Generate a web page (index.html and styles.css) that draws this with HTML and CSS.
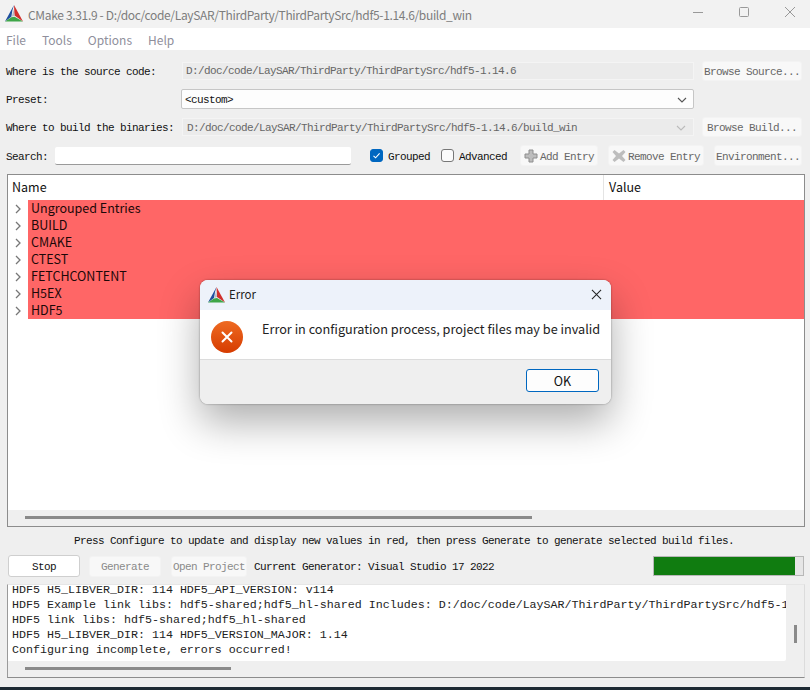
FILE: index.html
```html
<!DOCTYPE html>
<html lang="en">
<head>
<meta charset="utf-8">
<title>CMake</title>
<link rel="stylesheet" href="styles.css">
</head>
<body>
<div class="app">
  <header class="titlebar">
    <svg class="logo" viewBox="0 0 17 16"><polygon points="8.5,0 0,15.5 6,11 7,5" fill="#1f4f9e"/><polygon points="8.5,0 17,15.5 9,10" fill="#d0302c"/><polygon points="0,15.5 17,15.5 9,11 6,11.5" fill="#3fa648"/><polygon points="8,4 9,10 6.5,11" fill="#b8bcc4"/></svg>
    <span class="title">CMake 3.31.9 - D:/doc/code/LaySAR/ThirdParty/ThirdPartySrc/hdf5-1.14.6/build_win</span>
    <div class="winctl">
      <svg viewBox="0 0 12 12"><path d="M1 6.500H11" stroke="#999" fill="none"/></svg>
      <svg viewBox="0 0 12 12"><rect x="1.500" y="1.500" width="9" height="9" rx="1" stroke="#999" fill="none"/></svg>
      <svg viewBox="0 0 12 12"><path d="M1 1L11 11M11 1L1 11" stroke="#999" fill="none"/></svg>
    </div>
  </header>
  <nav class="menu"><span>File</span><span>Tools</span><span>Options</span><span>Help</span></nav>
  <main class="content">
    <div class="paths">
      <label class="mono">Where is the source code:</label>
      <div class="field mono dim">D:/doc/code/LaySAR/ThirdParty/ThirdPartySrc/hdf5-1.14.6</div>
      <button class="btn mono dim wide">Browse Source...</button>
      <label class="mono">Preset:</label>
      <div class="select mono"><span>&lt;custom&gt;</span><svg class="chev" viewBox="0 0 10 6"><path d="M1 1L5 5L9 1" stroke="#555" fill="none" stroke-width="1.1"/></svg></div>
      <span></span>
      <label class="mono">Where to build the binaries:</label>
      <div class="field mono dim combo"><span>D:/doc/code/LaySAR/ThirdParty/ThirdPartySrc/hdf5-1.14.6/build_win</span><svg class="chev" viewBox="0 0 10 6"><path d="M1 1L5 5L9 1" stroke="#bbb" fill="none" stroke-width="1.1"/></svg></div>
      <button class="btn mono dim wide">Browse Build...</button>
    </div>
    <div class="searchrow">
      <label class="mono searchlabel">Search:</label>
      <div class="search"></div>
      <span class="check on"><svg viewBox="0 0 13 13"><path d="M3.500 6.800L5.600 8.800L9.600 4.400" stroke="#fff" fill="none" stroke-width="1.1"/></svg></span>
      <label class="mono chk1">Grouped</label>
      <span class="check"></span>
      <label class="mono chk2">Advanced</label>
      <button class="btn mono dim add"><svg class="tool" viewBox="0 0 14 14"><path d="M5 1H9V5H13V9H9V13H5V9H1V5H5Z" fill="#bdbdbd" stroke="#8e8e8e"/></svg>Add Entry</button>
      <button class="btn mono dim remove"><svg class="tool" viewBox="0 0 14 14"><path d="M2.500 1L7 4.500L11.500 1L13.500 3L10 7L13.500 11L11.500 13L7 9.500L2.500 13L.5 11L4 7L.5 3Z" fill="#bdbdbd"/></svg>Remove Entry</button>
      <button class="btn mono dim env">Environment...</button>
    </div>
    <section class="tree">
      <div class="thead"><span class="tname">Name</span><span class="tvalue">Value</span></div>
      <ul class="rows">
        <li><svg viewBox="0 0 6 10"><path d="M1 1L5 5L1 9" stroke="#777" fill="none" stroke-width="1.3"/></svg><span>Ungrouped Entries</span></li>
        <li><svg viewBox="0 0 6 10"><path d="M1 1L5 5L1 9" stroke="#777" fill="none" stroke-width="1.3"/></svg><span>BUILD</span></li>
        <li><svg viewBox="0 0 6 10"><path d="M1 1L5 5L1 9" stroke="#777" fill="none" stroke-width="1.3"/></svg><span>CMAKE</span></li>
        <li><svg viewBox="0 0 6 10"><path d="M1 1L5 5L1 9" stroke="#777" fill="none" stroke-width="1.3"/></svg><span>CTEST</span></li>
        <li><svg viewBox="0 0 6 10"><path d="M1 1L5 5L1 9" stroke="#777" fill="none" stroke-width="1.3"/></svg><span>FETCHCONTENT</span></li>
        <li><svg viewBox="0 0 6 10"><path d="M1 1L5 5L1 9" stroke="#777" fill="none" stroke-width="1.3"/></svg><span>H5EX</span></li>
        <li><svg viewBox="0 0 6 10"><path d="M1 1L5 5L1 9" stroke="#777" fill="none" stroke-width="1.3"/></svg><span>HDF5</span></li>
      </ul>
      <div class="hscroll"><i class="thumb t1"></i></div>
    </section>
    <p class="hint mono">Press Configure to update and display new values in red, then press Generate to generate selected build files.</p>
    <div class="actions">
      <button class="btn mono stop">Stop</button>
      <button class="btn mono dim gen">Generate</button>
      <button class="btn mono dim open">Open Project</button>
      <span class="mono gentext">Current Generator: Visual Studio 17 2022</span>
      <div class="progress"><i></i></div>
    </div>
    <section class="logframe">
      <div class="logrow">
        <div class="logview"><pre class="log">HDF5 H5_LIBVER_DIR: 114 HDF5_API_VERSION: v114
HDF5 Example link libs: hdf5-shared;hdf5_hl-shared Includes: D:/doc/code/LaySAR/ThirdParty/ThirdPartySrc/hdf5-1.14.6/include
HDF5 link libs: hdf5-shared;hdf5_hl-shared
HDF5 H5_LIBVER_DIR: 114 HDF5_VERSION_MAJOR: 1.14
Configuring incomplete, errors occurred!</pre></div>
        <div class="vscroll"><i></i></div>
      </div>
      <div class="hscroll low"><i class="thumb t2"></i></div>
    </section>
  </main>
  <div class="taskedge"></div>

  <div class="dialog">
    <div class="dhead">
      <svg class="dlogo" viewBox="0 0 17 16"><polygon points="8.5,0 0,15.5 6,11 7,5" fill="#1f4f9e"/><polygon points="8.5,0 17,15.5 9,10" fill="#d0302c"/><polygon points="0,15.5 17,15.5 9,11 6,11.5" fill="#3fa648"/><polygon points="8,4 9,10 6.5,11" fill="#b8bcc4"/></svg>
      <span class="dtitle">Error</span>
      <svg class="dclose" viewBox="0 0 12 12"><path d="M1 1L11 11M11 1L1 11" stroke="#222" fill="none" stroke-width="1.1"/></svg>
    </div>
    <div class="dbody">
      <div class="erricon"><svg viewBox="0 0 12 12"><path d="M1.500 1.500L10.500 10.500M10.500 1.500L1.500 10.500" stroke="#fff" fill="none" stroke-width="2" stroke-linecap="round"/></svg></div>
      <p class="dmsg">Error in configuration process, project files may be invalid</p>
    </div>
    <div class="dfoot"><button class="okbtn">OK</button></div>
  </div>
</div>
</body>
</html>
```
FILE: styles.css
```css
* { box-sizing: border-box; }
html, body { margin: 0; padding: 0; height: 690px; overflow: hidden; }
body { background: #efefef; font-family: "Noto Sans CJK SC", "Noto Sans", sans-serif; color: #111; }
.app { position: relative; width: 810px; height: 690px; display: flex; flex-direction: column; overflow: hidden; }
.mono { font-family: "Liberation Mono", monospace; font-size: 11px; letter-spacing: -0.6px; color: #111; white-space: pre; padding-top: 2px; }
.mono.dim { color: #666; }

.titlebar { height: 28px; background: #f2f2f2; display: flex; align-items: center; padding-left: 5px; flex: none; }
.logo { width: 18px; height: 17px; margin-right: 5px; margin-top: -2px; }
.title { font-size: 12px; letter-spacing: -0.33px; color: #7d7d7d; white-space: nowrap; flex: 1; }
.winctl { display: flex; gap: 34px; padding-right: 14px; margin-top: -4px; }
.winctl svg { width: 12px; height: 12px; }

.menu { height: 22px; background: #fff; display: flex; gap: 16px; padding-left: 6px; align-items: center; font-size: 12px; color: #8f8f9c; flex: none; }

.content { flex: none; height: 637px; padding-top: 12px; display: flex; flex-direction: column; }
.paths { display: grid; grid-template-columns: 182px 512px 100px; column-gap: 0; grid-template-rows: 18px 20px 18px; row-gap: 9px; padding-left: 6px; align-items: center; }
.paths label { display: block; }
.field { height: 18px; margin-left: -6px; background: #ebebeb; border: 1px solid #f4f4f4; line-height: 15px; padding: 1px 0 0 3px; overflow: hidden; width: 512px; }
.combo { display: flex; justify-content: space-between; align-items: center; padding: 2px 7px 0 4px; }
.chev { width: 10px; height: 6px; flex: none; }
.select { height: 20px; margin-left: -7px; width: 513px; background: #fdfdfd; border: 1px solid #c6c6c6; border-radius: 2px; display: flex; justify-content: space-between; align-items: center; padding: 2px 6px 0 3px; }
.btn { background: #f8f8f8; border: 1px solid #f3f3f3; border-radius: 3px; padding: 2px 0 0; height: 20px; display: flex; align-items: center; justify-content: center; }
.wide { width: 100px; margin-left: 2px; }

.searchrow { display: flex; align-items: center; height: 21px; margin-top: 9px; padding-left: 6px; }
.searchlabel { width: 49px; }
.search { width: 296px; height: 18px; background: #fff; border-bottom: 1px solid #9a9a9a; border-radius: 2px; margin-right: 19px; }
.check { width: 13px; height: 13px; border: 1px solid #777; border-radius: 3px; background: #fbfbfb; flex: none; display: block; }
.check.on { background: #0067c0; border-color: #0067c0; }
.check svg { display: block; width: 13px; height: 13px; margin: -1px; }
.chk1 { margin-left: 5px; margin-right: 11px; width: 42px; }
.chk2 { margin-left: 5px; margin-right: 13px; width: 48px; }
.add { width: 78px; height: 21px; margin-right: 10px; }
.remove { width: 96px; height: 21px; margin-right: 10px; }
.env { width: 88px; height: 21px; }
.tool { width: 14px; height: 14px; margin-right: 2px; margin-top: -2px; flex: none; }

.tree { margin: 8px 6px 0 7px; height: 353px; width: 798px; background: #fff; border: 1px solid #8c8c8c; display: flex; flex-direction: column; position: relative; }
.thead { height: 25px; display: flex; align-items: flex-start; font-size: 12.5px; flex: none; }
.tname { width: 595px; padding-left: 4px; line-height: 23px; height: 25px; }
.tvalue { padding-left: 5px; border-left: 1px solid #e4e4e4; line-height: 23px; height: 25px; flex: 1; }
.rows { list-style: none; margin: 0; padding: 0; }
.rows li { height: 17px; display: flex; align-items: center; }
.rows svg { width: 6px; height: 10px; margin-left: 7px; margin-right: 7px; flex: none; }
.rows span { flex: 1; background: #ff6666; height: 17px; line-height: 15px; padding-left: 3px; font-size: 12.5px; color: #1c0808; }
.hscroll { position: absolute; left: 0; right: 0; bottom: 0; height: 16px; background: #efefef; }
.thumb { position: absolute; display: block; height: 3px; background: #8a8a8a; top: 6px; }
.t1 { left: 17px; width: 507px; }

.hint { margin: 7px 0 0 74px; height: 14px; line-height: 14px; padding-top: 0; }
.actions { display: flex; align-items: center; height: 22px; margin-top: 7px; padding-left: 8px; }
.stop { width: 72px; height: 22px; background: #fff; border: 1px solid #cfcfcf; margin-right: 9px; color: #111; }
.mono.dim.gen, .mono.dim.open { color: #8a8a8a; }
.gen { width: 72px; height: 21px; margin-right: 10px; }
.open { width: 76px; height: 21px; margin-right: 7px; }
.gentext { width: 399px; }
.progress { width: 151px; height: 20px; background: #e6e6e6; border: 1px solid #b8b8b8; }
.progress i { display: block; width: 141px; height: 18px; background: #107c10; }

.logframe { position: relative; margin: 7px 6px 0 7px; width: 798px; height: 94px; border-left: 1px solid #9a9a9a; border-bottom: 1px solid #8c8c8c; border-right: 1px solid #dcdcdc; border-top: 1px solid #e6e6e6; flex: none; }
.logrow { display: flex; height: 76px; }
.logview { width: 778px; height: 76px; background: #fff; overflow: hidden; border-radius: 0 0 2px 0; flex: none; }
.log { margin: -2px 0 0; padding: 0 0 0 4px; font-family: "Liberation Mono", monospace; font-size: 11.67px; line-height: 15px; color: #222; white-space: pre; }
.vscroll { position: relative; flex: 1; }
.vscroll i { position: absolute; display: block; left: 8px; top: 40px; width: 3px; height: 18px; background: #8a8a8a; }
.hscroll.low { bottom: 0; background: transparent; height: 17px; }
.t2 { left: 17px; width: 206px; top: 7px; }

.taskedge { position: absolute; left: 0; right: 0; bottom: 0; height: 3px; background: #1d2a33; }

.dialog { position: absolute; left: 200px; top: 280px; width: 411px; height: 124px; border-radius: 8px; overflow: hidden; background: #fff; box-shadow: 0 0 2px rgba(0,0,0,.45), 0 18px 40px rgba(0,0,0,.32); display: flex; flex-direction: column; }
.dhead { height: 30px; background: #edf2fa; display: flex; align-items: center; padding-left: 8px; flex: none; }
.dlogo { width: 17px; height: 16px; margin-right: 4px; }
.dtitle { font-size: 11.5px; line-height: 14px; margin-top: -2px; color: #222; flex: 1; }
.dclose { width: 11px; height: 11px; margin-right: 9px; margin-top: -2px; }
.dbody { height: 49px; display: flex; background: #fff; flex: none; padding-left: 11px; }
.erricon { width: 32px; height: 32px; border-radius: 50%; margin-top: 11px; background: linear-gradient(#ee6a22, #d63c00); display: flex; align-items: center; justify-content: center; flex: none; }
.erricon svg { width: 12px; height: 12px; }
.dmsg { margin: 9px 0 0 19px; font-size: 12.7px; line-height: 20px; white-space: nowrap; color: #222; }
.dfoot { flex: 1; background: #efefef; border-top: 1px solid #dcdcdc; display: flex; justify-content: flex-end; align-items: flex-start; padding: 9px 12px 0 0; }
.okbtn { width: 73px; height: 23px; background: #fdfdfd; border: 1px solid #0067c0; border-radius: 3px; font-family: inherit; font-size: 12.5px; color: #111; padding: 0; line-height: 20px; }
```
